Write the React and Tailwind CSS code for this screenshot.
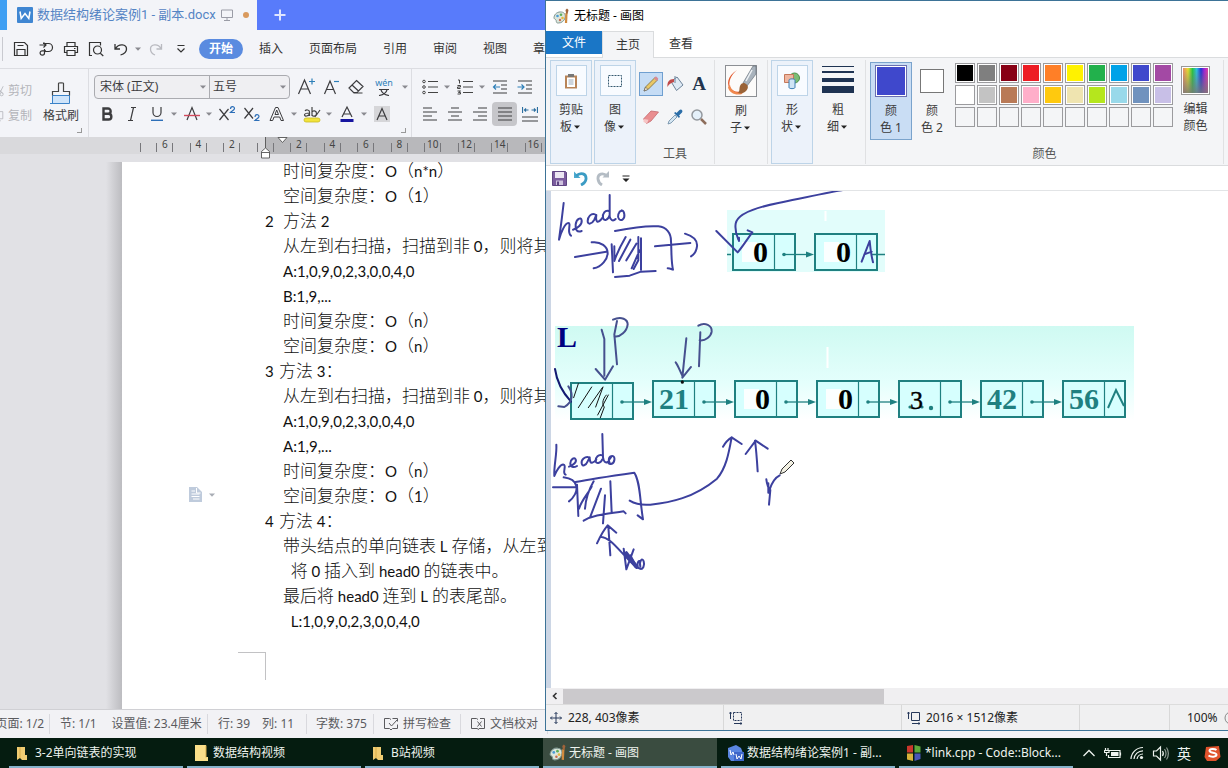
import React from "react";

const Caret = ({ className = "" }) => (
  <svg className={"shrink-0 " + className} width="10" height="6" viewBox="0 0 10 6" aria-hidden="true">
    <path d="M2 1.5h6L5 4.8z" fill="currentColor" />
  </svg>
);

function Ico({ size = 20, children, sw = 1.2, className = "" }) {
  return (
    <svg
      width={size}
      height={size}
      viewBox={`0 0 ${size} ${size}`}
      fill="none"
      stroke="currentColor"
      strokeWidth={sw}
      className={"shrink-0 " + className}
      aria-hidden="true"
    >
      {children}
    </svg>
  );
}

function Tool({ label, className = "w-[25px]", children }) {
  return (
    <button type="button" aria-label={label} title={label} className={"flex h-6 shrink-0 items-center justify-center " + className}>
      {children}
    </button>
  );
}

const ArrowBtn = () => (
  <button type="button" aria-label="展开" className="flex h-6 w-[10px] shrink-0 items-center justify-center text-[#8a8a90]">
    <Caret />
  </button>
);

/* ---------- writer window ---------- */

function WriterTabs() {
  return (
    <div className="flex h-[30px] shrink-0 items-stretch bg-[#587bfb]">
      <div className="w-[7px] bg-[#3f9ff3]" />
      <div className="flex w-[250px] items-center bg-[#f3f4f8] pl-[10px]">
        <svg width="16" height="16" viewBox="0 0 16 16" className="shrink-0" aria-hidden="true">
          <rect width="16" height="16" rx="1" fill="#3f86d2" />
          <path d="M3 4.500l1.200 7 3.800-5 3.800 5 1.200-7" fill="none" stroke="#fff" strokeWidth="1.500" />
        </svg>
        <span className="ml-1 font-['Roboto','Noto_Sans_CJK_SC',sans-serif] text-[13px] whitespace-nowrap text-[#5584c4]">数据结构绪论案例1 - 副本.docx</span>
        <Ico size={14} className="ml-1 text-[#9a9ca6]" sw={1}>
          <path d="M1.500 2h11v7.500h-11zM7 9.500v3M4 12.500h6" />
        </Ico>
        <span className="ml-[9px] h-[6px] w-[6px] rounded-full bg-[#d99a5e]" />
      </div>
      <button type="button" aria-label="新建标签" className="flex w-[45px] items-center justify-center text-[#dfe6ff]">
        <Ico size={14} sw={2}>
          <path d="M7 1.500v11M1.500 7h11" />
        </Ico>
      </button>
    </div>
  );
}

const menus = [
  ["插入", "w-[50px]"],
  ["页面布局", "w-[74px]"],
  ["引用", "w-[50px]"],
  ["审阅", "w-[50px]"],
  ["视图", "w-[50px]"],
  ["章节", "w-[50px]"],
];

function WriterMenu() {
  return (
    <div className="flex h-[39px] shrink-0 items-center border-b border-[#dcdde2] text-[12px] text-[#333]">
      <div className="mr-[5px] ml-[2px] h-6 w-px bg-[#c9cad0]" />
      <Tool label="保存">
        <Ico size={16}><path d="M1.500 14.500v-13h10l3 3v10zM4 14V8.500h8V14M4.500 4.500h6" /></Ico>
      </Tool>
      <Tool label="输出为PDF">
        <Ico size={16}><path d="M1.500 4h6M5.500 1.500L8 4 5.500 6.500M5 2.500h5.500a4 4 0 0 1 0 8H6.500M6.500 8v4a2.200 2.200 0 1 1-2.200-2.200H8" /></Ico>
      </Tool>
      <Tool label="打印">
        <Ico size={16}><path d="M4 5.500v-4h8v4M4 11.500H1.500v-6h13v6H12M4 9.500h8v5H4zM11 7.500h1.500" /></Ico>
      </Tool>
      <Tool label="打印预览">
        <Ico size={16}><path d="M4 14.500H1.500v-13h11v3M12.300 12.300l3 2.700" /><circle cx="9.500" cy="9" r="4" /></Ico>
      </Tool>
      <Tool label="撤销">
        <Ico size={16} sw={1.300}><path d="M2 3v5h5M2.500 7.500C6 2 13.500 3 13.500 8c0 3-2.500 5-6 6" /></Ico>
      </Tool>
      <ArrowBtn />
      <Tool label="恢复" className="w-[25px] text-[#b9bac0]">
        <Ico size={16} sw={1.300}><path d="M13.500 3v5h-5M13 7.500C10 2 2.500 3 2.500 8c0 3 2 5 4.500 6" /></Ico>
      </Tool>
      <Tool label="自定义快速访问">
        <Ico size={12}><path d="M2.500 2.500h7M2.500 5.500L6 9l3.500-3.500" /></Ico>
      </Tool>
      <button type="button" className="mr-[3px] ml-[6px] h-5 w-[44px] shrink-0 rounded-full bg-[#5a8be0] text-[12px] font-bold text-white">开始</button>
      {menus.map(([m, w]) => (
        <button key={m} type="button" className={"shrink-0 " + w}>{m}</button>
      ))}
    </div>
  );
}

function ListLines({ marks, x = 6 }) {
  return (
    <Ico size={16} className="text-[#444]">
      <path d={`M${x} 2.500h10M${x} 8h10M${x} 13.500h10`} />
      {marks}
    </Ico>
  );
}

function WriterRibbon() {
  return (
    <div className="flex h-[68px] shrink-0 items-stretch text-[12px] text-[#3c3c3f]">
      <div className="relative flex w-[89px] shrink-0 items-center border-r border-[#dcdde2]">
        <div className="flex w-8 flex-col gap-[1px] text-[#b3b4ba]">
          <button type="button" className="flex h-6 items-center gap-1 whitespace-nowrap">
            <svg width="5" height="14" viewBox="0 0 5 14" fill="none" stroke="currentColor" aria-hidden="true"><path d="M0 9l4-8M0 6l3 4" /><circle cx="2" cy="11" r="2" /></svg>
            剪切
          </button>
          <button type="button" className="flex h-6 items-center gap-1 whitespace-nowrap">
            <svg width="5" height="14" viewBox="0 0 5 14" fill="none" stroke="currentColor" aria-hidden="true"><path d="M0 1.500h3.500v9H0M1 13h-1" /></svg>
            复制
          </button>
        </div>
        <button type="button" className="ml-[11px] flex flex-col items-center gap-[2px] whitespace-nowrap">
          <svg width="24" height="24" viewBox="0 0 24 24" fill="none" aria-hidden="true">
            <path d="M3.500 14.500h17v8h-17z" fill="#cfe4fa" stroke="#3a82c8" />
            <path d="M3.500 14.500v-4h6V2.500c0-1 5-1 5 0v8h6v4" stroke="#444" strokeWidth="1.200" />
            <path d="M1 22.500h3" stroke="#3a82c8" />
          </svg>
          格式刷
        </button>
        <span className="absolute right-[6px] bottom-[4px] h-[5px] w-[5px] border-r border-b border-[#999]" />
      </div>

      <div className="relative w-[323px] shrink-0 border-r border-[#dcdde2] pt-[6px]">
        <div className="flex items-center pl-[5px]">
          <div className="flex h-[24px] w-[196px] items-stretch rounded border border-[#aaabb0] bg-[#efeff2]">
            <label className="relative flex w-[115px] items-center border-r border-[#aaabb0]">
              <select aria-label="字体" className="w-full appearance-none pl-[5px] text-[12px]" defaultValue="a">
                <option value="a">宋体 (正文)</option>
              </select>
              <Caret className="absolute right-[1px] text-[#8a8a90]" />
            </label>
            <label className="relative flex flex-1 items-center">
              <select aria-label="字号" className="w-full appearance-none pl-[3px] text-[12px]" defaultValue="a">
                <option value="a">五号</option>
              </select>
              <Caret className="absolute right-[1px] text-[#8a8a90]" />
            </label>
          </div>
          <Tool label="增大字号" className="ml-[3px] w-[25px]">
            <Ico size={20}><path d="M2.500 17L8.500 3l6 14M4.500 12h8" /><path d="M13 4.500h6M16 1.500v6" stroke="#2d7fb8" /></Ico>
          </Tool>
          <Tool label="减小字号">
            <Ico size={20}><path d="M3.500 17L9 4l5.500 13M5.500 12.500h7" /><path d="M13 4.500h5" stroke="#2d7fb8" /></Ico>
          </Tool>
          <Tool label="清除格式">
            <Ico size={18}><path d="M9.500 2.500l6.500 6-6 6H6.500L2 10zM5 7l6.500 6M6.500 15h9" /></Ico>
          </Tool>
          <Tool label="拼音指南" className="w-[32px] flex-col">
            <span className="text-[9px] leading-[10px] text-[#2d7fb8]">wén</span>
            <svg width="12" height="8" viewBox="0 0 12 8" fill="none" stroke="currentColor" strokeWidth="1.200" aria-hidden="true"><path d="M1 1.500h10M3 2c1 3 4 5 8 5.500M9 2C8 5 5 7 1 7.500" /></svg>
          </Tool>
          <ArrowBtn />
        </div>
        <div className="mt-[3px] flex items-center pl-[5px]">
          <Tool label="加粗"><Ico size={16} sw={2.400}><path d="M4.500 2.500h4.500a2.600 2.600 0 0 1 0 5.300H4.500zM4.500 7.800h5a2.800 2.800 0 0 1 0 5.700h-5z" /></Ico></Tool>
          <Tool label="倾斜"><Ico size={16}><path d="M7 1.500h5M4 14.500h5M9.500 1.500l-3 13" /></Ico></Tool>
          <Tool label="下划线"><Ico size={16}><path d="M4 1v5.500a4 4 0 0 0 8 0V1" /><path d="M2 14.300h12" stroke="#2d6fb8" strokeWidth="1.400" /></Ico></Tool>
          <ArrowBtn />
          <Tool label="删除线"><Ico size={18}><path d="M4 15L9 2.500 14 15" /><path d="M1 10.500h16" stroke="#d04a5c" strokeWidth="1.400" /></Ico></Tool>
          <ArrowBtn />
          <Tool label="上标"><Ico size={18}><path d="M1.500 4l9 11M10.500 4l-9 11" /><path d="M12.500 4c0-3 4-3 4-.5 0 1.500-2.500 2.500-4 4h4.500" stroke="#2d6fb8" /></Ico></Tool>
          <Tool label="下标"><Ico size={18}><path d="M1.500 3l8.500 10.500M10 3l-8.500 10.500" /><path d="M12 12c0-3 4-3 4-.5 0 1.500-2.500 2.500-4 4h4.500" stroke="#2d6fb8" /></Ico></Tool>
          <Tool label="文字效果"><Ico size={18} sw={1}><path d="M2 15.500L7.500 2.500h2.500L15.500 15.500H13L11.700 12H6l-1.300 3.500zM7 9.500h3.500L8.700 5z" /></Ico></Tool>
          <ArrowBtn />
          <Tool label="突出显示">
            <svg width="20" height="20" viewBox="0 0 20 20" fill="none" stroke="#444" strokeWidth="1.200" aria-hidden="true">
              <rect x="2" y="14" width="16" height="4" rx="2" fill="#f2e33c" stroke="#c9bb22" strokeWidth=".8" />
              <path d="M3 7c1-1.500 4.500-1.500 4.500 1V12M7.500 9C5 9 2.500 9.500 2.500 11s4 1.500 5-1M10 3v9M10 8c1-2 4.500-1.500 4.500 1.500s-3.500 3.500-4.500 1.500M18 6l-5 7" />
            </svg>
          </Tool>
          <ArrowBtn />
          <Tool label="字体颜色"><Ico size={18}><path d="M4 12L9 2l5 10M5.500 9h7" /><path d="M2.500 15.500h13" stroke="#1715a0" strokeWidth="3" /></Ico></Tool>
          <ArrowBtn />
          <Tool label="字符底纹"><Ico size={18}><rect x="1" y="1" width="16" height="16" fill="#d6d6d9" stroke="none" /><path d="M4 15L9 3.500 14 15M5.500 11h7" /></Ico></Tool>
        </div>
        <span className="absolute right-[5px] bottom-[4px] h-[5px] w-[5px] border-r border-b border-[#999]" />
      </div>

      <div className="w-[150px] shrink-0 pt-[6px]">
        <div className="flex items-center pl-[5px]">
          <Tool label="项目符号">
            <ListLines marks={<g strokeWidth="1"><circle cx="2" cy="2.500" r="1.300" /><circle cx="2" cy="8" r="1.300" /><circle cx="2" cy="13.500" r="1.300" /></g>} />
          </Tool>
          <ArrowBtn />
          <Tool label="编号">
            <ListLines marks={<path d="M1 1h1.500v3.500M.5 6.500h3v1.500h-3v1.500h3M.5 12h3l-2 1.500h2v1.500h-3" strokeWidth="1" />} />
          </Tool>
          <ArrowBtn />
          <Tool label="减少缩进量">
            <Ico size={16}><path d="M1 2h14M9 6h6M9 10h6M1 14h14" /><path d="M8 8H1.500M4 5.500L1.500 8 4 10.500" stroke="#2d7fb8" /></Ico>
          </Tool>
          <Tool label="增加缩进量">
            <Ico size={16}><path d="M1 2h14M9 6h6M9 10h6M1 14h14" /><path d="M.5 8H7M4.500 5.500L7 8 4.500 10.500" stroke="#2d7fb8" /></Ico>
          </Tool>
        </div>
        <div className="mt-[3px] flex items-center pl-[5px]">
          <Tool label="左对齐"><Ico size={16}><path d="M1 2h9M1 6h14M1 10h9M1 14h14" /></Ico></Tool>
          <Tool label="居中"><Ico size={16}><path d="M4 2h8M1 6h14M4 10h8M1 14h14" /></Ico></Tool>
          <Tool label="右对齐"><Ico size={16}><path d="M6 2h9M1 6h14M6 10h9M1 14h14" /></Ico></Tool>
          <Tool label="两端对齐" className="w-[25px] rounded bg-[#c6c6ca]"><Ico size={16}><path d="M1 2h14M1 6h14M1 10h14M1 14h14" /></Ico></Tool>
          <Tool label="分散对齐"><Ico size={16}><path d="M0 11h16M0 15h16" /><path d="M.5 1v6M15.500 1v6M2.500 4h4M4 2.500L2.500 4 4 5.500M13.500 4h-4M12 2.500L13.500 4 12 5.500" stroke="#2d6fa0" /></Ico></Tool>
        </div>
      </div>
    </div>
  );
}

const rulerMarks = ["6", "4", "2", "", "2", "4", "6", "8", "10", "12", "14", "16"];

function Ruler() {
  return (
    <div className="relative flex h-[17px] shrink-0 bg-[#d9d9dc]">
      <div className="absolute inset-y-0 right-0 left-[265px] bg-[#b8b8bb]" />
      <span className="mb-[2px] ml-[140px] h-[9px] w-px self-end bg-[#77777b]" />
      <div className="relative ml-[7px] flex w-[402px] shrink-0">
        {rulerMarks.map((n, i) => (
          <div key={i} className="flex flex-1 items-end justify-between px-2">
            <span className="mb-[2px] h-[9px] w-px bg-[#77777b]" />
            <span className="mb-[3px] text-[10px] leading-[13px] text-[#444]">{n}</span>
            <span className="mb-[2px] h-[9px] w-px bg-[#77777b]" />
          </div>
        ))}
      </div>
      <svg className="absolute top-0 left-[258px]" width="30" height="24" viewBox="0 0 30 24" fill="#fff" stroke="#555" strokeWidth=".9" aria-hidden="true">
        <path d="M7.500 0v11" />
        <path d="M20 .5h9L24.500 5.500z" />
        <path d="M3.500 14.500L7.500 11l4 3.500v6.500h-8zM3.500 15.500h8" />
      </svg>
    </div>
  );
}

const lines = [
  ["", "时间复杂度：O（n*n）"],
  ["", "空间复杂度：O（1）"],
  ["2", "方法 2"],
  ["", "从左到右扫描，扫描到非 0，则将其"],
  ["", "A:1,0,9,0,2,3,0,0,4,0"],
  ["", "B:1,9,..."],
  ["", "时间复杂度：O（n）"],
  ["", "空间复杂度：O（n）"],
  ["3", "方法 3："],
  ["", "从左到右扫描，扫描到非 0，则将其"],
  ["", "A:1,0,9,0,2,3,0,0,4,0"],
  ["", "A:1,9,..."],
  ["", "时间复杂度：O（n）"],
  ["", "空间复杂度：O（1）"],
  ["4", "方法 4："],
  ["", "带头结点的单向链表 L 存储，从左到"],
  ["", "  将 0 插入到 head0 的链表中。"],
  ["", "最后将 head0 连到 L 的表尾部。"],
  ["", "  L:1,0,9,0,2,3,0,0,4,0"],
];

function Mixed({ text }) {
  return text.split(/([\x00-\x7f]+)/).map((part, i) =>
    i % 2 ? <span key={i} className="text-[15px] font-normal [font-kerning:none]">{part}</span> : part
  );
}

function Page() {
  return (
    <div className="flex min-h-0 flex-1 bg-[#e1e1e5] pt-[8px]">
      <div className="w-[106px] shrink-0" />
      <div className="w-4 shrink-0 bg-linear-to-r from-[#e1e1e5] to-[#bcbcc0]" />
      <div className="relative flex-1 overflow-hidden bg-white">
        <div className="pl-[143px] font-['Lato','Noto_Sans_CJK_SC',sans-serif] text-[17px] text-[#111]">
          {lines.map(([n, t], i) => (
            <p key={i} className={"flex items-baseline font-light whitespace-pre " + (i === 0 ? "h-[21px] leading-[17px]" : "h-[25px] leading-[25px]")}>
              <span className={(n === "3" || n === "4" ? "w-[14px]" : "w-[18px]") + " text-[15px] font-normal"}>{n}</span>
              <span><Mixed text={t} /></span>
            </p>
          ))}
        </div>
        <div className="mt-[19px] ml-[116px] h-7 w-7 border-t border-r border-[#c2c2c4]" />
        <button type="button" aria-label="粘贴选项" className="absolute top-[325px] left-[67px] flex items-center gap-[5px] text-[#a9adb5]">
          <svg width="13" height="15" viewBox="0 0 13 15" aria-hidden="true">
            <path d="M0 0h8l5 5v10H0z" fill="#bfcbdc" />
            <path d="M2.500 4h3.500M2.500 7h8M2.500 9.500h8M4 12h6.500M7.500 1v5h4" stroke="#fff" fill="none" />
          </svg>
          <Caret />
        </button>
      </div>
    </div>
  );
}

function Stat({ children, className = "" }) {
  return <div className={"flex h-5 shrink-0 items-center border-r border-[#d9d9de] " + className}>{children}</div>;
}

function WriterStatus() {
  return (
    <div className="flex h-[29px] shrink-0 items-center border-t border-[#d0d0d4] bg-[#f2f2f5] text-[12px] whitespace-nowrap text-[#5a5a5e]">
      <Stat className="w-[50px] justify-end pr-[5px]">页面: 1/2</Stat>
      <Stat className="w-[158px] gap-[15px] pl-[10px]"><span>节: 1/1</span><span>设置值: 23.4厘米</span></Stat>
      <Stat className="w-[99px] gap-3 pl-[10px]"><span>行: 39</span><span>列: 11</span></Stat>
      <Stat className="w-[67px] pl-[9px]">字数: 375</Stat>
      <Stat className="w-[87px] gap-1 pl-[9px]">
        <Ico size={16} sw={1}><path d="M8 3.500L6.500 2.500h-5v10h5L8 14l1.500-1.500h5v-4M9.500 2.500h5v3M6 7l2.500 3L14 4" /></Ico>
        <span>拼写检查</span>
      </Stat>
      <Stat className="w-[87px] gap-1 pl-[9px]">
        <Ico size={16} sw={1}><path d="M9 13.500L7 12.500H1.500v-10h5l1.500 1M10 2.500h4.500v10H9M7.500 5.500l4 5M11.500 5.500l-4 5" /></Ico>
        <span>文档校对</span>
      </Stat>
    </div>
  );
}

/* ---------- paint window ---------- */

const Palette = ({ size = 17 }) => (
  <svg width={size} height={size} viewBox="0 0 17 17" aria-hidden="true" className="shrink-0">
    <path d="M1 9.500C1.500 5.500 5 3.500 8.500 4c3 .3 4.500 3 3.500 6-.8 3-3.500 5-6.500 5-3 .2-1.800-2-2.500-3S.8 11 1 9.500z" fill="#dce6dc" stroke="#7f9690" />
    <circle cx="4.500" cy="8" r="1.300" fill="#4a9ad4" />
    <circle cx="8" cy="6.800" r="1.300" fill="#5cae5a" />
    <circle cx="9.500" cy="10" r="1.300" fill="#e8b840" />
    <circle cx="7" cy="12" r="1.200" fill="#c96a50" />
    <path d="M13 15l.5-10" stroke="#d08a3e" strokeWidth="2.200" />
    <path d="M13.200 5.500l-.7-3.500L14 .5 15.500 2l-.8 3.500z" fill="#a0643a" />
  </svg>
);

function TwoLine({ a, b, caret = true }) {
  return (
    <span className="mt-[5px] flex flex-col items-center text-[12px] leading-[17px] text-[#3b3b3b]">
      <span>{a}</span>
      <span className="flex items-center">{b}{caret && <Caret className="text-[#222]" />}</span>
    </span>
  );
}

function BigButton({ a, b, framed, children }) {
  return (
    <button type="button" className={"flex h-[104px] w-[42px] shrink-0 flex-col items-center border pt-1 " + (framed ? "border-[#bdd4e8] bg-[#ecf2fa]" : "border-transparent")}>
      {children}
      <TwoLine a={a} b={b} />
    </button>
  );
}

const Boxed = ({ children }) => (
  <span className="flex h-[31px] w-[31px] items-center justify-center border border-[#bdd4e8] bg-[#f8fbff]">{children}</span>
);

const swatches = [
  "bg-black", "bg-[#7f7f7f]", "bg-[#880015]", "bg-[#ed1c24]", "bg-[#ff7f27]", "bg-[#fff200]", "bg-[#22b14c]", "bg-[#00a2e8]", "bg-[#3f48cc]", "bg-[#a349a4]",
  "bg-white", "bg-[#c3c3c3]", "bg-[#b97a57]", "bg-[#ffaec9]", "bg-[#ffc90e]", "bg-[#efe4b0]", "bg-[#b5e61d]", "bg-[#99d9ea]", "bg-[#7092be]", "bg-[#c8bfe7]",
  "", "", "", "", "", "", "", "", "", "",
];

function ToolGrid() {
  return (
    <div className="flex h-[104px] w-[79px] shrink-0 flex-col items-center justify-between border-r border-[#e0e1e3] pt-3">
      <div className="grid grid-cols-3 gap-y-[9px]">
        <Tool label="铅笔" className="w-6 border border-[#6f9fd0] bg-[#c5dcf5]">
          <svg width="18" height="18" viewBox="0 0 18 18" aria-hidden="true"><path d="M2 16l1.500-4L13 2.500 15.500 5 6.500 14z" fill="#e8c766" stroke="#7a6a3a" strokeWidth=".8" /><path d="M2 16l1.500-4L6 14.500z" fill="#f5e7cf" stroke="#555" strokeWidth=".6" /><path d="M12 3.500L14.500 6l1.500-1.500a1 1 0 0 0 0-1.200L14.500 1.800a1 1 0 0 0-1.300 0z" fill="#d78a94" /></svg>
        </Tool>
        <Tool label="填充" className="w-6">
          <svg width="18" height="18" viewBox="0 0 18 18" aria-hidden="true"><path d="M5 6.500L11 2l6 8-6.500 5.500z" fill="#dfeaf5" stroke="#6c8299" /><path d="M9 1v7" stroke="#6c8299" /><path d="M8 4C3 4 1 7 1.500 12 3 9 5 8 8 7z" fill="#c04a4a" /></svg>
        </Tool>
        <Tool label="文本" className="w-6"><span className="font-['Liberation_Serif',serif] text-[19px] font-bold text-[#22344d]">A</span></Tool>
        <Tool label="橡皮擦" className="w-6">
          <svg width="18" height="16" viewBox="0 0 18 16" aria-hidden="true"><path d="M1.500 10L9 2l7.500 1L9 12l-4.500 2.500z" fill="#e98e90" stroke="#c56a6e" strokeWidth=".8" /><path d="M1.500 10l5 .8L5 14.500 1.500 13z" fill="#f7c6c6" /></svg>
        </Tool>
        <Tool label="颜色选取器" className="w-6">
          <svg width="18" height="18" viewBox="0 0 18 18" aria-hidden="true"><path d="M2 16l1-3 6-6 2 2-6 6z" fill="#d5e6f2" stroke="#6b8aa5" strokeWidth=".8" /><path d="M8 5l5 5 1-1.500-1-1 3-3c1.500-2-1-4-2.500-2.500l-3 3-1-1z" fill="#2b6ea8" /></svg>
        </Tool>
        <Tool label="放大镜" className="w-6">
          <svg width="18" height="18" viewBox="0 0 18 18" aria-hidden="true"><circle cx="7" cy="7" r="5" fill="#e4f0fa" stroke="#93989e" strokeWidth="1.500" /><path d="M11 11l5 5" stroke="#8d6e5c" strokeWidth="2.500" /></svg>
        </Tool>
      </div>
      <span className="text-[12px] leading-5 text-[#555]">工具</span>
    </div>
  );
}

function PaintRibbon() {
  return (
    <div className="flex h-[109px] shrink-0 items-start overflow-hidden border-y border-[#dadcde] bg-[#f4f5f7] pt-[2px] pl-1">
      <div className="flex gap-[2px]">
        <BigButton a="剪贴" b="板" framed>
          <Boxed>
            <svg width="16" height="16" viewBox="0 0 16 16" aria-hidden="true"><path d="M2 2.500h12v13H2z" fill="#b88458" /><path d="M4 4.500h8v9.500H4z" fill="#fff" /><path d="M5 1h6v3H5z" fill="#777" /><path d="M5.500 7h5M5.500 9h5M5.500 11h5" stroke="#9ab" /></svg>
          </Boxed>
        </BigButton>
        <BigButton a="图" b="像" framed>
          <Boxed><svg width="16" height="14" viewBox="0 0 16 14" aria-hidden="true"><path d="M1.500 1.500h13v11h-13z" fill="none" stroke="#35586f" strokeDasharray="2 1" /></svg></Boxed>
        </BigButton>
      </div>
      <ToolGrid />
      <div className="flex h-[104px] w-[53px] shrink-0 justify-center border-r border-[#e0e1e3]">
        <BigButton a="刷" b="子">
          <svg width="32" height="32" viewBox="0 0 32 32" className="shrink-0" aria-hidden="true">
            <rect x=".5" y=".5" width="31" height="31" fill="#fcfbfa" stroke="#8c8f94" />
            <path d="M12 5C2 11 1 20 6 25c4 4 9 4 11 1-5 2-10 0-12-4C3 17 6 10 12 5z" fill="#e2582c" />
            <path d="M5 20c1 6 7 9 13 7l-1 2c-6 2-13-1-14-7z" fill="#f0884e" />
            <path d="M18 18L28 1h3v8L22 21z" fill="#a9b3bd" stroke="#5b6470" strokeWidth=".6" />
            <path d="M21 16l6-11" stroke="#eef1f4" strokeWidth="1.500" />
            <path d="M13 28c2-2 1-4 2-7 1-3 4-4 6-2 3 2 2 5 0 7-2 2-5 3-8 2z" fill="#9a6338" />
          </svg>
        </BigButton>
      </div>
      <div className="flex h-[104px] w-[98px] shrink-0 justify-between border-r border-[#e0e1e3] pr-[6px] pl-[3px]">
        <BigButton a="形" b="状" framed>
          <Boxed>
            <svg width="18" height="18" viewBox="0 0 18 18" aria-hidden="true"><circle cx="11.500" cy="6" r="5" fill="#7bbd74" stroke="#4c8f4a" /><path d="M1.500 2.500h9v8h-9z" fill="#efb6a0" stroke="#c4785a" /><path d="M6 8c0-1.500 6-1.500 6 0v7.500c0 1.500-6 1.500-6 0z" fill="#cfe4f5" stroke="#3f7fb5" /></svg>
          </Boxed>
        </BigButton>
        <BigButton a="粗" b="细">
          <svg width="32" height="31" viewBox="0 0 32 31" className="shrink-0" aria-hidden="true"><path d="M0 1h32v1H0zM0 6h32v2H0zM0 13h32v4H0zM0 21h32v7H0z" fill="#1f3352" /></svg>
        </BigButton>
      </div>
      <div className="flex h-[104px] w-[358px] shrink-0 flex-col items-center justify-between border-r border-[#e0e1e3] pt-[2px]">
        <div className="flex items-start self-start pl-1">
          <button type="button" className="flex h-[78px] w-[42px] flex-col items-center border border-[#7aa3cc] bg-[#c9ddf4] pt-[2px]">
            <span className="h-8 w-8 border border-[#6a6fb0] bg-white p-[1px]"><span className="block h-full w-full bg-[#3f48cc]" /></span>
            <TwoLine a="颜" b="色 1" caret={false} />
          </button>
          <button type="button" className="ml-[2px] flex w-[36px] flex-col items-center pt-[7px]">
            <span className="mb-1 h-6 w-6 border border-[#777] bg-white" />
            <TwoLine a="颜" b="色 2" caret={false} />
          </button>
          <div className="ml-[5px] grid grid-cols-10 gap-[2px] pt-[1px]">
            {swatches.map((c, i) => (
              <button key={i} type="button" aria-label={"颜色 " + (i + 1)} className={"h-5 w-5 border border-[#9b9b9e] p-[1px] " + (c ? "bg-white" : "bg-[#f4f5f7]")}>
                <span className={"block h-full w-full " + c} />
              </button>
            ))}
          </div>
          <button type="button" className="ml-2 flex flex-col items-center pt-1">
            <span className="h-[29px] w-[29px] border border-[#999] bg-white p-[1px]">
              <svg width="25" height="25" viewBox="0 0 25 25" aria-hidden="true">
                <defs>
                  <linearGradient id="hue"><stop offset="0" stopColor="#f08a6a" /><stop offset=".2" stopColor="#e8e02c" /><stop offset=".38" stopColor="#25c840" /><stop offset=".55" stopColor="#2bbfe8" /><stop offset=".72" stopColor="#2030d8" /><stop offset=".85" stopColor="#a020d8" /><stop offset="1" stopColor="#e040a0" /></linearGradient>
                  <linearGradient id="dim" x2="0" y2="1"><stop offset="0" stopColor="#777" stopOpacity="0" /><stop offset="1" stopColor="#777" stopOpacity=".85" /></linearGradient>
                </defs>
                <path d="M0 0h25v25H0z" fill="url(#hue)" />
                <path d="M0 0h25v25H0z" fill="url(#dim)" />
              </svg>
            </span>
            <TwoLine a="编辑" b="颜色" caret={false} />
          </button>
        </div>
        <span className="text-[12px] leading-5 text-[#555]">颜色</span>
      </div>
    </div>
  );
}

const TEAL = "#1f8080";

function Node({ x, y = 381, h = 36, hollow }) {
  return (
    <g fill="none" stroke={TEAL}>
      <rect x={x} y={y} width="62" height={h} fill="#d6fffe" strokeWidth="2" />
      {hollow && <rect x={x + 9} y={y + 8} width="15" height="20" fill="#fbffff" stroke="none" />}
      <path d={`M${x + 41.500} ${y}v${h}`} strokeWidth="1.200" />
    </g>
  );
}

function Link({ x, y = 402 }) {
  return (
    <g fill={TEAL} stroke={TEAL}>
      <path d={`M${x} ${y}h26`} strokeWidth="1.300" />
      <circle cx={x} cy={y} r="1.800" stroke="none" />
      <path d={`M${x + 22} ${y - 3}l8 3-8 3z`} stroke="none" />
    </g>
  );
}

function Board() {
  return (
    <svg width="677" height="497" viewBox="551 191 677 497" className="block shrink-0" role="img" aria-label="单向链表示意图" fontFamily="Liberation Serif, serif">
      <defs>
        <linearGradient id="sea" x2="0" y2="1"><stop offset="0" stopColor="#cffaf2" /><stop offset=".6" stopColor="#e4fffc" /><stop offset="1" stopColor="#ffffff" /></linearGradient>
      </defs>
      <rect x="727" y="210" width="158" height="62" fill="#e2fdfb" />
      <rect x="555" y="326" width="579" height="94" fill="url(#sea)" />
      <path d="M827.500 347v21M825.500 211v10" stroke="#fff" strokeWidth="2" />

      <Node x={733} y={234} hollow />
      <Node x={815} y={234} hollow />
      <Link x={784} y={254.500} />
      <path d="M727 254.500h4M871 254.500h14" stroke={TEAL} strokeWidth="1.300" />

      <Node x={571} y={383} />
      <Node x={653} />
      <Node x={735} hollow />
      <Node x={817} hollow />
      <Node x={899} />
      <Node x={981} />
      <Node x={1063} />
      {[622, 704, 786, 868, 950, 1032].map((x) => <Link key={x} x={x} />)}

      <g fontSize="30" fontWeight="700">
        <text x="753" y="262">0</text>
        <text x="836" y="262">0</text>
        <text x="755" y="409">0</text>
        <text x="838" y="409">0</text>
        <text x="659" y="409" fill={TEAL}>21</text>
        <text x="987" y="409" fill={TEAL}>42</text>
        <text x="1069" y="409" fill={TEAL}>56</text>
        <text x="557" y="347" fill="#000080">L</text>
      </g>
      <g fill={TEAL}><circle cx="931" cy="408" r="2.200" /><circle cx="910" cy="407" r="1.600" /><circle cx="922" cy="407" r="1.600" /></g>
      <text x="910" y="409" fontSize="26" stroke="#000" strokeWidth=".4">3</text>
      <path d="M1108 408l8-18 8 16" fill="none" stroke={TEAL} strokeWidth="2" />

      <g fill="none" stroke="#3c409e" strokeWidth="6" strokeLinecap="round" strokeLinejoin="round">
        <g transform="translate(545 185) scale(.33333)">
          <path d="M56 54l-6 50-8 60c6-22 18-50 28-50s-6 30 8 38" />
          <path d="M84 134c14-4 28-16 26-28s-16-4-18 12 4 26 18 20" />
          <path d="M150 88c-12-4-22 8-22 20s12 10 20-4l6-14c-2 12 0 22 6 20s10-8 14-14" />
          <path d="M192 78c-12-4-20 8-18 20 2 12 16 8 20-8M194 30v64c2 12 10 16 18 8" />
          <path d="M230 76c-10 4-14 18-8 26s18 0 16-14-8-12-14-8" />
          <path d="M90 216l94-16M140 172c28-4 48 14 48 32s-18 42-42 46M200 178l4 84M210 138c50-10 104-16 130-14 24 2 38 20 38 44 2 30 0 60 6 86-6-2-10-4-16-4M330 184l106-10M420 146c26 8 38 20 36 38s-8 24-18 30" />
          <path d="M242 156c-14 24-26 48-34 72M208 184v44M256 164l-34 64M274 176l-30 50M284 196l-24 54M280 156v70l-14 26M288 160v94M210 276l44-4 34-12 44-2" />
          <path d="M890 16c-60 10-130 26-190 38-70 14-124 34-128 62-2 14 2 34 8 48M514 138l64 64c14-16 26-36 44-60l-14-6M582 158v10" />
          <path d="M950 230l24-62c2 22 4 40 10 64M958 208l22-8" />
        </g>
        <g transform="translate(545 315) scale(.33333)" stroke="#46508e">
          <path d="M170 44l8 28v110M152 162l28 32 24-40M216 18l-8 40 8 90M204 14c26-12 44 0 44 14-2 20-22 40-40 36" />
          <path d="M424 70l-12 118M392 142c8 10 14 30 22 44l24-30M466 52l-4 102M460 32c20-12 42 0 40 18-2 14-18 28-36 26" />
          <path d="M30 162c6 42 26 74 48 98" stroke="#141a72" />
          <path d="M70 214c14 20 16 46-12 62l-18-2" />
          <path d="M100 206l-14 42M140 216l-40 62M172 218l-42 60M190 240l-32 60M174 216l-22 60M184 240c-14 16-12 30-6 36l-12 32" stroke="#111" strokeWidth="3" />
          <path d="M412 200v2" stroke="#111" strokeWidth="9" />
        </g>
        <g transform="translate(545 430) scale(.33333)">
          <path d="M34 44c2 30-8 64-6 94c6-16 18-36 28-34s-6 26 6 30" />
          <path d="M72 110c12-4 24-14 20-22s-16 0-16 12 10 14 20 8" />
          <path d="M132 82c-12-4-24 8-22 18s12 8 18-6l6-12c0 10 2 18 8 16s10-6 12-10" />
          <path d="M172 76c-12-4-20 6-20 16s14 10 20-4M172 12l2 70c2 12 6 18 14 14" />
          <path d="M194 98c-6-8-2-20 8-20s8 22-4 24-8-12 0-20" />
          <path d="M24 172h72M56 142c16 2 34 10 38 26s-8 36-22 46M96 164l4 94M92 156c30-6 120-20 176-28 18 28 16 80 26 140l-16-12M140 170c-10 20-30 40-38 66M146 154c-14 24-24 56-26 82M168 176l-32 84M180 196l-6 84M196 154l4 94M116 272c30-18 70-20 120-28l6 6" />
          <path d="M254 212c20 12 40 14 62 12 60-6 130-20 200-78 28-32 36-80 44-124M534 50c8-14 16-22 26-28l30 20M602 72l30-40 36 24M630 32c4 30 6 60 8 92" />
          <path d="M664 148c2 18 8 30 10 30 6-18 14-34 30-42M676 180l-4 44M670 160v28" />
          <path d="M156 340c10-22 20-40 32-54l26 22M190 290l6 86M166 320c34 2 60 50 108 92M236 356l8 62 22-60M240 370l34 44M256 376l20 38M286 392c-10 0-12 20-2 24s16-10 12-22-14-2-10 16" />
          <path d="M244 368l30 40M252 384l20 26" strokeWidth="9" />
        </g>
      </g>
      <path d="M780 474l2-5 9-9 3 3-9 9z" fill="#f2f0e2" stroke="#333" />
    </svg>
  );
}

function PaintStatus() {
  return (
    <div className="flex h-[26px] shrink-0 items-stretch overflow-hidden border-t border-[#dcdcdc] bg-[#f0f0f1] text-[12px] whitespace-nowrap text-[#222]">
      <div className="flex w-[178px] shrink-0 items-center gap-[6px] border-r border-[#d8d8d8] pl-[4px]">
        <Ico size={12} sw={1} className="text-[#26385a]"><path d="M6 .5v11M.5 6h11M4.500 2L6 .5 7.500 2M4.500 10L6 11.500 7.500 10M2 4.500L.5 6 2 7.500M10 4.500L11.500 6 10 7.500" /></Ico>
        228, 403像素
      </div>
      <div className="flex w-[178px] shrink-0 items-center border-r border-[#d8d8d8] pl-[5px]">
        <Ico size={14} sw={1} className="text-[#26385a]"><path d="M1.500 1v7M.5 2.500L1.500 1l1 1.500M5 12.500h8M11.500 11.500l1.500 1-1.500 1" /><path d="M4.500 1.500h8v8h-8z" strokeDasharray="2 1" /></Ico>
      </div>
      <div className="flex w-[178px] shrink-0 items-center gap-[5px] border-r border-[#d8d8d8] pl-[5px]">
        <Ico size={14} sw={1} className="text-[#26385a]"><path d="M1.500 1v7M.5 2.500L1.500 1l1 1.500M5 12.500h8M11.500 11.500l1.500 1-1.500 1M4.500 1.500h8v8h-8z" /></Ico>
        2016 × 1512像素
      </div>
      <div className="w-[90px] shrink-0 border-r border-[#d8d8d8]" />
      <div className="flex shrink-0 items-center gap-[6px] pl-[17px]">
        100%
        <Ico size={14} sw={1} className="text-[#888]"><circle cx="7" cy="7" r="6" /><path d="M4 7h6" /></Ico>
      </div>
    </div>
  );
}

function PaintWindow() {
  return (
    <section className="absolute top-0 right-0 bottom-[7px] left-[545px] flex flex-col overflow-hidden border-t border-b border-l border-[#3d7397] bg-white">
      <div className="flex h-[30px] shrink-0 items-center gap-[4px] pl-[7px] text-[12px] text-black">
        <Palette />
        无标题 - 画图
      </div>
      <div className="flex h-[26px] shrink-0 items-start text-[12px] text-[#333]">
        <button type="button" className="h-[23px] w-[56px] bg-[#1a76c6] text-white">文件</button>
        <button type="button" className="relative z-10 h-[27px] w-[52px] border border-b-0 border-[#dadcde] bg-[#f4f5f7]">主页</button>
        <button type="button" className="h-[26px] w-[54px]">查看</button>
      </div>
      <PaintRibbon />
      <div className="flex h-[25px] shrink-0 items-center gap-[6px] border-b border-[#e2e4e6] pl-[6px]">
        <button type="button" aria-label="保存"><svg width="15" height="15" viewBox="0 0 15 15" aria-hidden="true"><path d="M.5.5h13l1 1v13H.5z" fill="#7b5c9e" stroke="#5f4582" /><path d="M3 1h9v6H3z" fill="#ece6f2" /><path d="M4 9.500h7V14H4z" fill="#cfc3de" /><path d="M5 10.500h2V14H5z" fill="#5f4582" /></svg></button>
        <button type="button" aria-label="撤销"><svg width="16" height="16" viewBox="0 0 16 16" aria-hidden="true"><path d="M1 1.500v6.500h6.500z" fill="#4aa9cf" /><path d="M3 6c5-4.500 10.500-2 10 3-.3 3-2 4.500-5 6" fill="none" stroke="#3c9cc4" strokeWidth="2.800" /></svg></button>
        <button type="button" aria-label="重做"><svg width="16" height="16" viewBox="0 0 16 16" aria-hidden="true"><path d="M14 1v6.500H7.500z" fill="#b4bcc4" /><path d="M12 6C8 2 2.500 4 3 9c.3 3 1.500 4.500 4 6" fill="none" stroke="#b4bcc4" strokeWidth="2.800" /></svg></button>
        <button type="button" aria-label="自定义快速访问工具栏" className="ml-1"><svg width="10" height="10" viewBox="0 0 10 10" aria-hidden="true"><path d="M1.500 2.500h7v1h-7zM1.500 5.500h7L5 9z" fill="#222" /></svg></button>
      </div>
      <div className="flex min-h-0 flex-1 overflow-hidden">
        <div className="w-[5px] shrink-0 bg-[#ccd6e5]" />
        <Board />
      </div>
      <div className="flex h-[16px] shrink-0 items-center bg-[#f0eff1]">
        <button type="button" aria-label="向左滚动" className="flex h-[16px] w-[17px] items-center justify-center text-[#333]"><Ico size={8} sw={1.600}><path d="M5.500 1L2.500 4l3 3" /></Ico></button>
        <div className="h-[15px] w-[47%] bg-[#cbc9cc]" />
      </div>
      <PaintStatus />
    </section>
  );
}

/* ---------- taskbar ---------- */

const Folder = ({ wide }) => (
  <svg width="18" height="18" viewBox="0 0 18 18" aria-hidden="true" className="shrink-0">
    {wide ? (
      <path d="M2 1h11v12h2v4H2z" fill="#fbe08a" />
    ) : (
      <path d="M2 3h8v8h2v5H7l-2-2-3 2z" fill="#f0cd72" />
    )}
    <path d={wide ? "M13 1.500v12" : "M5 3v11"} stroke="#d8ad4a" />
  </svg>
);

const CodeBlocks = () => (
  <svg width="16" height="16" viewBox="0 0 16 16" aria-hidden="true">
    <path d="M1 1l6-1v7.500H1z" fill="#c9372c" /><path d="M8.500 0l6 1.500V7.500h-6z" fill="#5da83a" />
    <path d="M1 8.500h6V16l-6-1.500z" fill="#d8b23a" /><path d="M8.500 8.500h6V14L8.500 16z" fill="#4a56b8" />
  </svg>
);

const WpsIcon = () => (
  <svg width="16" height="16" viewBox="0 0 16 16" aria-hidden="true">
    <path d="M0 3l8-3 5 3 2 5v8H3L0 12z" fill="#5a86e0" /><path d="M6 7h10v9H6z" fill="#3d66c8" />
    <path d="M2 5l1 5 2-3 1 3M8 9l1 5 2-3 2 3 1-5" stroke="#fff" fill="none" />
  </svg>
);

const tasks = [
  ["3-2单向链表的实现", <Folder />],
  ["数据结构视频", <Folder wide />],
  ["B站视频", <Folder />],
  ["无标题 - 画图", <Palette size={18} />],
  ["数据结构绪论案例1 - 副...", <WpsIcon />],
  ["*link.cpp - Code::Block...", <CodeBlocks />],
];

function Taskbar() {
  return (
    <footer className="flex h-[30px] shrink-0 items-stretch overflow-hidden bg-[#051c10] pl-[9px] text-[12px] whitespace-nowrap text-[#eef3ee]">
      <div className="flex shrink-0 gap-1">
        {tasks.map(([t, icon], i) => (
          <button key={i} type="button" className={"flex w-[174px] items-center overflow-hidden border-b-2 border-[#86b3cb] pt-[2px] pl-[6px] " + (i === 3 ? "bg-[#3a4c40]" : "")}>
            <span className="mr-[2px] flex w-[18px] shrink-0 justify-center">{icon}</span>
            {t}
          </button>
        ))}
      </div>
      <div className="ml-[9px] flex shrink-0 items-center gap-[8px]">
        <Ico size={14} sw={1.300}><path d="M1.500 10L7 4.500l5.500 5.500" /></Ico>
        <Ico size={18} sw={1.200}><path d="M5 6.500h11v7H4.500V11M16.500 8.500v3M1.500 4v2.500M4 4v2.500M.5 6.500h4.500v2H.5zM2.500 8.500V12" /><path d="M7 8h7.500v4H7z" fill="currentColor" stroke="none" /></Ico>
        <Ico size={14} sw={1.200}><path d="M1 13A12 12 0 0 1 13 1.500M4 13A9 9 0 0 1 13 4.800M7 13a6 6 0 0 1 6-5" /><circle cx="11.500" cy="11.500" r="1.600" fill="currentColor" stroke="none" /></Ico>
        <Ico size={17} sw={1.200}><path d="M1.500 6h3l4-4v13l-4-4h-3zM10.500 6c1 1.500 1 3.500 0 5" /><path d="M12.500 4c2 2.500 2 6.500 0 9M14.500 2.500c2.500 3.500 2.500 8.500 0 12" opacity=".6" /></Ico>
        <span className="text-[14px]">英</span>
        <svg width="17" height="17" viewBox="0 0 17 17" className="ml-[5px]" aria-hidden="true"><path d="M2 2l13-1 1.500 11L12 16H3L.5 12z" fill="#e0532c" /><path d="M12.500 5c-2-1.500-7-1.500-7 .8s7 1.700 7 4-5.500 2.500-8 .7" stroke="#fff" strokeWidth="2" fill="none" /></svg>
      </div>
    </footer>
  );
}

export default function App() {
  return (
    <div className="flex h-screen flex-col overflow-hidden font-['Noto_Sans','Noto_Sans_CJK_SC',sans-serif]">
      <main className="relative flex min-h-0 flex-1 flex-col overflow-hidden bg-[#f3f4f8]">
        <WriterTabs />
        <WriterMenu />
        <WriterRibbon />
        <Ruler />
        <Page />
        <WriterStatus />
        <PaintWindow />
      </main>
      <Taskbar />
    </div>
  );
}
